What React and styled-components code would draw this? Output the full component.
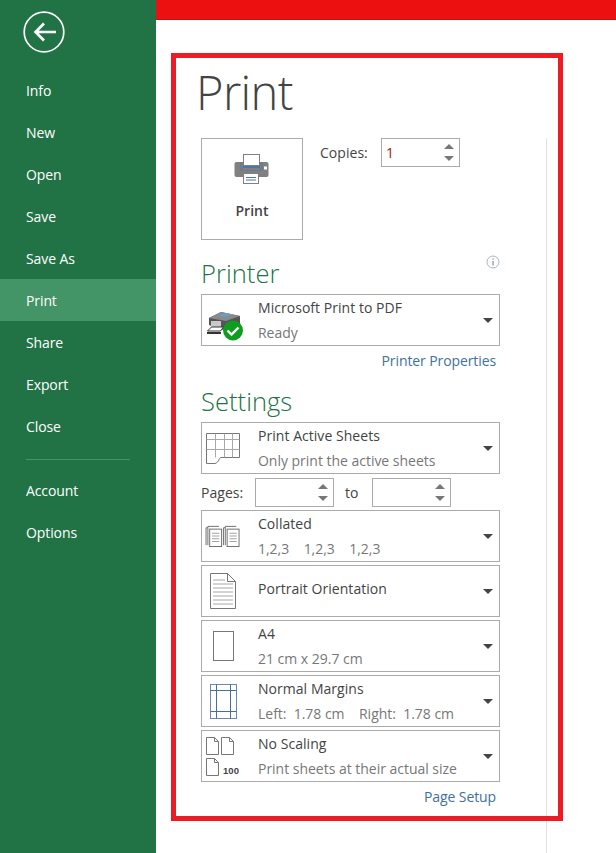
import styled, { createGlobalStyle } from 'styled-components';

const GlobalStyle = createGlobalStyle`
  html, body {
    margin: 0;
    height: 100%;
    overflow: hidden;
    background: #fff;
  }
  * {
    box-sizing: border-box;
  }
`;

const Page = styled.div`
  display: flex;
  position: relative;
  width: 616px;
  height: 853px;
  font-family: "Open Sans", "Noto Sans", "Liberation Sans", sans-serif;
  font-size: 14px;
  letter-spacing: 0.04px;
  color: #444;
`;

// SIDEBAR
const Sidebar = styled.nav`
  flex: 0 0 156px;
  display: flex;
  flex-direction: column;
  background-color: #217346;
  color: #fff;
`;

const BackButton = styled.div`
  height: 69px;
  padding: 11px 0 0 23px;
`;

const NavItem = styled.div`
  height: 42px;
  padding-left: 26px;
  display: flex;
  align-items: center;
  letter-spacing: -0.1px;
  background-color: ${({ $active }) => ($active ? '#439467' : 'transparent')};
`;

const NavDivider = styled.div`
  height: 1px;
  margin: 12px 26px 9px;
  background-color: #4d8f6b;
`;

// MAIN
const Main = styled.main`
  flex: 1;
  display: flex;
  flex-direction: column;
`;

const TopBar = styled.div`
  height: 20px;
  background-color: #ec1010;
  border-bottom: 1px solid #c90f0f;
`;

const Content = styled.div`
  flex: 1;
  width: 391px;
  display: flex;
  flex-direction: column;
`;

const Title = styled.h1`
  margin: 0;
  height: 118px;
  padding: 37px 0 0 40px;
  font-size: 47px;
  font-weight: 300;
  line-height: 70px;
  letter-spacing: -0.6px;
  color: #444;
`;

const Panel = styled.div`
  flex: 1;
  padding-left: 45px;
  border-right: 1px solid #e1e1e1;
`;

const PrintRow = styled.div`
  display: flex;
  gap: 17px;
`;

const PrintButton = styled.div`
  width: 102px;
  height: 102px;
  border: 1px solid #ababab;
  display: flex;
  flex-direction: column;
  align-items: center;
  padding-top: 15px;
  gap: 15px;
  font-weight: 600;
  line-height: 19px;
`;

const Copies = styled.div`
  display: flex;
  align-items: flex-start;
  line-height: 29px;
`;

const CopiesLabel = styled.span`
  width: 61px;
`;

const Spinner = styled.div`
  width: ${({ $width }) => $width}px;
  height: 29px;
  border: 1px solid #ababab;
  display: flex;
  justify-content: space-between;
  padding-left: 4px;
  color: #a01818;
  line-height: 27px;
`;

const SpinArrows = styled.div`
  width: 20px;
  display: flex;
  flex-direction: column;
  justify-content: space-between;
  align-items: center;
  padding: 5px 0 5px;
`;

const SpinUp = styled.span`
  border-left: 5px solid transparent;
  border-right: 5px solid transparent;
  border-bottom: 5px solid #777;
`;

const SpinDown = styled(SpinUp)`
  border-bottom: 0;
  border-top: 5px solid #777;
`;

const SectionHead = styled.div`
  display: flex;
  justify-content: space-between;
  align-items: flex-start;
  width: 299px;
  height: ${({ $height }) => $height}px;
  padding-top: ${({ $top }) => $top}px;
`;

const Heading = styled.h2`
  margin: 0;
  font-size: 25.5px;
  font-weight: 300;
  line-height: 36px;
  color: #217346;
`;

const Dropdown = styled.div`
  width: 299px;
  height: 52px;
  margin-bottom: ${({ $gap }) => $gap ?? 3}px;
  border: 1px solid #ababab;
  display: flex;
  align-items: center;
`;

const DropIcon = styled.div`
  flex: 0 0 42px;
  height: 50px;
  margin-right: 14px;
  padding-top: ${({ $nudge }) => $nudge ?? 0}px;
  display: flex;
  align-items: center;
  justify-content: center;
`;

const DropText = styled.div`
  flex: 1;
  display: flex;
  flex-direction: column;
  gap: 6px;
  line-height: 19px;
  padding-bottom: ${({ $single }) => ($single ? 6 : 0)}px;
`;

const DropSub = styled.div`
  color: #777;
  white-space: pre;
  letter-spacing: -0.02px;
`;

const DropArrow = styled.span`
  margin: 0 6px 0 0;
  border-left: 5px solid transparent;
  border-right: 5px solid transparent;
  border-top: 5px solid #444;
`;

const LinkRow = styled.div`
  width: 295px;
  text-align: right;
  color: #41719c;
  line-height: 20px;
  letter-spacing: -0.1px;
  padding-top: ${({ $top }) => $top}px;
`;

const PagesRow = styled.div`
  display: flex;
  align-items: center;
  width: 299px;
  height: 29px;
  margin-bottom: 3px;
`;

const PagesLabel = styled.span`
  width: 54px;
`;

const ToLabel = styled.span`
  width: 38px;
  padding-left: 11px;
`;

// Overlay annotation
const Frame = styled.div`
  position: absolute;
  left: 171px;
  top: 53px;
  width: 392px;
  height: 768px;
  border: 5px solid #ed1c24;
  pointer-events: none;
`;

const BackIcon = () => (
  <svg width="42" height="42" viewBox="0 0 42 42" fill="none" stroke="#fff">
    <circle cx="21" cy="21" r="19.8" strokeWidth="1.7" />
    <path d="M33 21H12.500M21 12.500L12.500 21l8.500 8.500" strokeWidth="2.6" />
  </svg>
);

const PrinterIcon = () => (
  <svg width="36" height="32" viewBox="0 0 36 32">
    <rect x="0.5" y="8" width="34" height="15" rx="2" fill="#808080" />
    <path d="M9 8h17v6H9z" fill="#4a76ab" />
    <path d="M6 8h3v8h17V8h3v9H6z" fill="#4a76ab" opacity="0.35" />
    <rect x="9.5" y="0.5" width="16" height="11" fill="#fff" stroke="#808080" />
    <rect x="9.5" y="19.5" width="15" height="10" fill="#fff" stroke="#808080" />
    <path d="M12 23.5h10M12 26h10" stroke="#4a76ab" />
    <rect x="30" y="12.5" width="3" height="3" fill="#fff" />
  </svg>
);

const ReadyIcon = () => (
  <svg width="42" height="30" viewBox="0 0 42 30">
    <g transform="translate(5 0)">
      <path d="M2 7l12-6 19 4v10L14 19 2 14z" fill="#555" />
      <path d="M2 7l12-6 19 4-14 5z" fill="#8a8a8a" />
      <path d="M11 4l9-2 6 1.500-9 2.500z" fill="#6b9fc9" />
      <path d="M4 10h10v6H4z" fill="#c9c9c9" />
      <path d="M0.500 20l4-4h12l-3 4z" fill="#fff" stroke="#333" />
      <path d="M0 21h14v2H0z" fill="#333" />
      <circle cx="26" cy="19.500" r="10" fill="#0f9d1f" />
      <path d="M20.500 19.500l4 4 7-7" fill="none" stroke="#fff" strokeWidth="2.400" />
    </g>
  </svg>
);

const SheetsIcon = () => (
  <svg width="34" height="31" viewBox="0 0 34 31" fill="none" stroke="#777">
    <path d="M0.500 0.500h33v24H15c-2 0-2 5-6 6H0.500z" />
    <path d="M0.500 6.500h33M0.500 16.500h33M9.500 0.500v24M18.500 0.500v24M26.500 0.500v24" stroke="#a8a8a8" />
  </svg>
);

const CollatedIcon = () => (
  <svg width="36" height="22" viewBox="0 0 38 24" fill="#fff" stroke="#666">
    {[0, 19].map((x) => (
      <g key={x}>
        <path d={`M${x + 0.5} 22V3h11`} />
        <path d={`M${x + 2.5} 22V1.500h12`} />
        <rect x={x + 4.5} y="4.500" width="13" height="19" />
        <path d={`M${x + 7} 9h8M${x + 7} 12h8M${x + 7} 15h8M${x + 7} 18h8`} stroke="#999" />
      </g>
    ))}
  </svg>
);

const PortraitIcon = () => (
  <svg width="26" height="36" viewBox="0 0 26 36" fill="none" stroke="#777">
    <path d="M0.500 0.500h17l8 8v27H0.500z" />
    <path d="M17.500 0.500v8h8" />
    <path d="M3 7h12M3 11h20M3 15h20M3 19h20M3 23h20M3 27h20M3 31h20" stroke="#a8a8a8" />
  </svg>
);

const PaperIcon = () => (
  <svg width="21" height="30" viewBox="0 0 21 30" fill="none" stroke="#777">
    <rect x="0.500" y="0.500" width="20" height="29" />
  </svg>
);

const MarginsIcon = () => (
  <svg width="27" height="35" viewBox="0 0 27 35" fill="none" stroke="#6d8aa5">
    <rect x="0.500" y="0.500" width="26" height="34" />
    <path d="M0.500 6.500h26M0.500 27.500h26M6.500 0.500v34M20.500 0.500v34" stroke="#41719c" />
  </svg>
);

const ScalingIcon = () => (
  <svg width="34" height="39" viewBox="0 0 34 39" fill="none" stroke="#777">
    <path d="M0.500 0.500h8l4 4v13H0.500z" />
    <path d="M8.500 0.500v4h4" />
    <path d="M15.500 0.500h8l4 4v13h-12z" />
    <path d="M23.500 0.500v4h4" />
    <path d="M0.500 21.500h8l4 4v13H0.500z" />
    <path d="M8.500 21.500v4h4" />
    <text
      x="17"
      y="37"
      fill="#444"
      stroke="none"
      fontFamily="Liberation Sans"
      fontSize="9.500"
      fontWeight="700"
    >
      100
    </text>
  </svg>
);

const Select = ({ icon, nudge, title, sub, gap }) => (
  <Dropdown $gap={gap}>
    <DropIcon $nudge={nudge}>{icon}</DropIcon>
    <DropText $single={!sub}>
      <div>{title}</div>
      {sub && <DropSub>{sub}</DropSub>}
    </DropText>
    <DropArrow />
  </Dropdown>
);

const NumberBox = ({ width, value }) => (
  <Spinner $width={width}>
    <span>{value}</span>
    <SpinArrows>
      <SpinUp />
      <SpinDown />
    </SpinArrows>
  </Spinner>
);

const NAV_TOP = ['Info', 'New', 'Open', 'Save', 'Save As', 'Print', 'Share', 'Export', 'Close'];

const App = () => (
  <Page>
    <GlobalStyle />
    <Sidebar>
      <BackButton>
        <BackIcon />
      </BackButton>
      {NAV_TOP.map((item) => (
        <NavItem key={item} $active={item === 'Print'}>
          {item}
        </NavItem>
      ))}
      <NavDivider />
      <NavItem>Account</NavItem>
      <NavItem>Options</NavItem>
    </Sidebar>
    <Main>
      <TopBar />
      <Content>
        <Title>Print</Title>
        <Panel>
          <PrintRow>
            <PrintButton>
              <PrinterIcon />
              <span>Print</span>
            </PrintButton>
            <Copies>
              <CopiesLabel>Copies:</CopiesLabel>
              <NumberBox width={79} value="1" />
            </Copies>
          </PrintRow>
          <SectionHead $height={54} $top={15}>
            <Heading>Printer</Heading>
            <svg width="14" height="14" viewBox="0 0 14 14" fill="none">
              <circle cx="7" cy="7" r="6" stroke="#9fb8cc" />
              <path d="M7 6v4.500M7 3.500v1.200" stroke="#777" />
            </svg>
          </SectionHead>
          <Select icon={<ReadyIcon />} nudge={11} title="Microsoft Print to PDF" sub="Ready" gap={0} />
          <LinkRow $top={5}>Printer Properties</LinkRow>
          <SectionHead $height={51} $top={12}>
            <Heading>Settings</Heading>
          </SectionHead>
          <Select
            icon={<SheetsIcon />}
            title="Print Active Sheets"
            sub="Only print the active sheets"
            gap={4}
          />
          <PagesRow>
            <PagesLabel>Pages:</PagesLabel>
            <NumberBox width={79} />
            <ToLabel>to</ToLabel>
            <NumberBox width={79} />
          </PagesRow>
          <Select icon={<CollatedIcon />} title="Collated" sub={'1,2,3    1,2,3    1,2,3'} />
          <Select icon={<PortraitIcon />} title="Portrait Orientation" />
          <Select icon={<PaperIcon />} title="A4" sub="21 cm x 29.7 cm" />
          <Select
            icon={<MarginsIcon />}
            title="Normal Margins"
            sub={'Left:  1.78 cm    Right:  1.78 cm'}
          />
          <Select
            icon={<ScalingIcon />}
            title="No Scaling"
            sub="Print sheets at their actual size"
            gap={0}
          />
          <LinkRow $top={5}>Page Setup</LinkRow>
        </Panel>
      </Content>
    </Main>
    <Frame />
  </Page>
);

export default App;
